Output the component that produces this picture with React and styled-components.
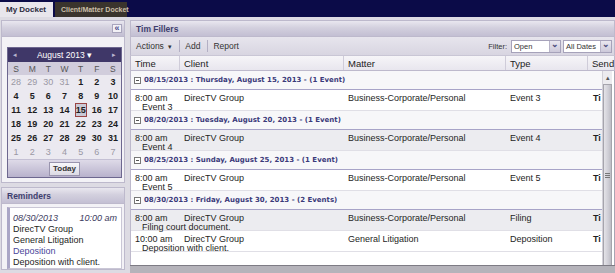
import React from 'react'
import styled, { createGlobalStyle } from 'styled-components'

const Global = createGlobalStyle`
  html, body { margin: 0; padding: 0; background: #dddbe3; }
  body { font-family: "Liberation Sans", Arial, sans-serif; font-size: 9px; color: #222; }
  * { box-sizing: border-box; }
`

const calDays = [
  [28, 29, 30, 31, 1, 2, 3],
  [4, 5, 6, 7, 8, 9, 10],
  [11, 12, 13, 14, 15, 16, 17],
  [18, 19, 20, 21, 22, 23, 24],
  [25, 26, 27, 28, 29, 30, 31],
  [1, 2, 3, 4, 5, 6, 7],
]

const groups = [
  {
    title: '08/15/2013 : Thursday, August 15, 2013 - (1 Event)',
    events: [{ time: '8:00 am', client: 'DirecTV Group', matter: 'Business-Corporate/Personal', type: 'Event 3', note: 'Event 3' }],
  },
  {
    title: '08/20/2013 : Tuesday, August 20, 2013 - (1 Event)',
    events: [{ time: '8:00 am', client: 'DirecTV Group', matter: 'Business-Corporate/Personal', type: 'Event 4', note: 'Event 4', shade: true }],
  },
  {
    title: '08/25/2013 : Sunday, August 25, 2013 - (1 Event)',
    events: [{ time: '8:00 am', client: 'DirecTV Group', matter: 'Business-Corporate/Personal', type: 'Event 5', note: 'Event 5' }],
  },
  {
    title: '08/30/2013 : Friday, August 30, 2013 - (2 Events)',
    events: [
      { time: '8:00 am', client: 'DirecTV Group', matter: 'Business-Corporate/Personal', type: 'Filing', note: 'Filing court document.', shade: true },
      { time: '10:00 am', client: 'DirecTV Group', matter: 'General Litigation', type: 'Deposition', note: 'Deposition with client.' },
    ],
  },
]

function App() {
  return (
    <Page>
      <Global />
      <TabBar>
        <Tab active>My Docket</Tab>
        <Tab>Client/Matter Docket</Tab>
      </TabBar>
      <Body>
        <Sidebar>
          <PanelHead>
            <span />
            <Collapse>«</Collapse>
          </PanelHead>
          <CalPanel>
            <Calendar>
              <CalHead>
                <Arrow>◂</Arrow>
                <span>August 2013 ▾</span>
                <Arrow>▸</Arrow>
              </CalHead>
              <DayNames>
                {['S', 'M', 'T', 'W', 'T', 'F', 'S'].map((d, i) => <span key={i}>{d}</span>)}
              </DayNames>
              <Dates>
                {calDays.map((row, r) =>
                  row.map((d, c) => {
                    const other = (r === 0 && d > 20) || r === 5
                    return (
                      <DateCell key={r + '-' + c} other={other} today={d === 15 && r === 2}>
                        {d}
                      </DateCell>
                    )
                  })
                )}
              </Dates>
              <TodayBar>
                <TodayButton>Today</TodayButton>
              </TodayBar>
            </Calendar>
          </CalPanel>
          <PanelHead gap>
            <HeadTitle>Reminders</HeadTitle>
          </PanelHead>
          <RemPanel>
            <Reminder>
              <RemTop>
                <span>08/30/2013</span>
                <span>10:00 am</span>
              </RemTop>
              <RemLine>DirecTV Group</RemLine>
              <RemLine>General Litigation</RemLine>
              <RemLine accent>Deposition</RemLine>
              <RemLine>Deposition with client.</RemLine>
            </Reminder>
          </RemPanel>
        </Sidebar>

        <Main>
          <PanelHead>
            <HeadTitle>Tim Fillers</HeadTitle>
          </PanelHead>
          <Toolbar>
            <ToolItem>Actions <Caret>▾</Caret></ToolItem>
            <Sep />
            <ToolItem>Add</ToolItem>
            <Sep />
            <ToolItem>Report</ToolItem>
            <Spacer />
            <FilterLabel>Filter:</FilterLabel>
            <Select width={50}>
              <span>Open</span>
              <SelectBtn>⌄</SelectBtn>
            </Select>
            <Select width={49}>
              <span>All Dates</span>
              <SelectBtn>⌄</SelectBtn>
            </Select>
          </Toolbar>
          <ColHead>
            <Col>Time</Col>
            <Col>Client</Col>
            <Col>Matter</Col>
            <Col>Type</Col>
            <Col last>Send</Col>
          </ColHead>
          <GridArea>
            <Rows>
              {groups.map((g) => (
                <React.Fragment key={g.title}>
                  <GroupRow>
                    <Toggle />
                    {g.title}
                  </GroupRow>
                  {g.events.map((e, i) => (
                    <EventRow key={i} shade={e.shade}>
                      <Cells>
                        <Cell>{e.time}</Cell>
                        <Cell>{e.client}</Cell>
                        <Cell>{e.matter}</Cell>
                        <Cell>{e.type}</Cell>
                        <Cell send>Ti</Cell>
                      </Cells>
                      <Note>{e.note}</Note>
                    </EventRow>
                  ))}
                </React.Fragment>
              ))}
            </Rows>
            <ScrollBar>
              <ScrollUp>▴</ScrollUp>
              <Thumb>
                <Grip />
              </Thumb>
            </ScrollBar>
          </GridArea>
          <BottomBar />
        </Main>
      </Body>
    </Page>
  )
}

export default App

const Page = styled.div`
  width: 615px;
  height: 273px;
  display: flex;
  flex-direction: column;
  overflow: hidden;
  background: #dddbe3;
`

const TabBar = styled.div`
  height: 17px;
  background: #0b0b48;
  display: flex;
  align-items: flex-end;
  flex-shrink: 0;
`

const Tab = styled.div`
  height: 15px;
  display: flex;
  align-items: center;
  white-space: nowrap;
  padding: ${(p) => (p.active ? '0 8px 0 6px' : '0 6px')};
  margin-right: 2px;
  font-size: ${(p) => (p.active ? '8px' : '7px')};
  font-weight: bold;
  background: ${(p) => (p.active ? '#e8e6ec' : '#3a342d')};
  color: ${(p) => (p.active ? '#2a2a3c' : '#cbbfa8')};
  width: ${(p) => (p.active ? '53px' : '72px')};
`

const Body = styled.div`
  flex: 1;
  display: flex;
  padding-top: 3px;
  min-height: 0;
`

const Sidebar = styled.div`
  width: 124px;
  margin-left: 1px;
  display: flex;
  flex-direction: column;
`

const PanelHead = styled.div`
  height: 17px;
  flex-shrink: 0;
  display: flex;
  align-items: center;
  justify-content: space-between;
  padding: 0 2px 0 5px;
  margin-top: ${(p) => (p.gap ? '4px' : '0')};
  background: linear-gradient(#e9e7ef 0%, #d3d0de 45%, #c3bfd3 100%);
  border: 1px solid #bdb9cc;
`

const HeadTitle = styled.span`
  font-weight: bold;
  font-size: 8.5px;
  color: #3e3e6e;
`

const Collapse = styled.div`
  width: 10px;
  height: 9px;
  border: 1px solid #a9a5bd;
  background: #f2f1f6;
  color: #4a4a8a;
  font-size: 9px;
  font-weight: bold;
  line-height: 6px;
  text-align: center;
`

const CalPanel = styled.div`
  height: 146px;
  background: #f3f2f6;
  border: 1px solid #bdb9cc;
  border-top: none;
  padding: 10px 3px 0 5px;
`

const Calendar = styled.div`
  width: 115px;
  border: 1px solid #6d678f;
  background: #ebe9f0;
`

const CalHead = styled.div`
  height: 14px;
  background: #3f3768;
  color: #fff;
  display: flex;
  align-items: center;
  justify-content: space-between;
  padding: 0 5px;
  font-size: 8.5px;
`

const Arrow = styled.span`
  color: #b9b5cf;
  font-size: 7px;
`

const DayNames = styled.div`
  height: 13px;
  display: grid;
  grid-template-columns: repeat(7, 1fr);
  align-items: center;
  text-align: center;
  background: #d1cddc;
  color: #555;
  font-size: 8.5px;
`

const Dates = styled.div`
  display: grid;
  grid-template-columns: repeat(7, 1fr);
  grid-auto-rows: 14px;
`

const DateCell = styled.div`
  display: flex;
  align-items: center;
  justify-content: center;
  font-size: 9px;
  font-weight: ${(p) => (p.other ? 'normal' : 'bold')};
  color: ${(p) => (p.other ? '#9a98a4' : '#1c1c22')};
  ${(p) =>
    p.today &&
    `
    margin: 0 2px;
    border: 1px solid #9a4444;
    background: #c9c9d6;
  `}
`

const TodayBar = styled.div`
  height: 18px;
  display: flex;
  align-items: center;
  justify-content: center;
  background: linear-gradient(#dedae8, #b8b2cc);
  border-top: 1px solid #c4c0d4;
`

const TodayButton = styled.div`
  height: 14px;
  padding: 0 3px;
  display: flex;
  align-items: center;
  border: 1px solid #9994ae;
  background: linear-gradient(#f8f7fa, #dcdae4);
  font-size: 8px;
  font-weight: bold;
  color: #333;
`

const RemPanel = styled.div`
  flex: 1;
  background: #f3f2f6;
  border: 1px solid #bdb9cc;
  border-top: none;
  padding: 3px 3px 0 5px;
  margin-bottom: 3px;
`

const Reminder = styled.div`
  width: 115px;
  height: 62px;
  background: #fff;
  border: 1px solid #cac7d6;
  border-left: 3px solid #aaa6c6;
  padding: 5px 4px 0 3px;
`

const RemTop = styled.div`
  display: flex;
  justify-content: space-between;
  font-style: italic;
  color: #3c3a5e;
  line-height: 11px;
  height: 11px;
`

const RemLine = styled.div`
  line-height: 11px;
  height: 11px;
  color: ${(p) => (p.accent ? '#4a469a' : '#1e1e24')};
`

const Main = styled.div`
  flex: 1;
  margin-left: 5px;
  display: flex;
  flex-direction: column;
  min-width: 0;
`

const Toolbar = styled.div`
  height: 18px;
  flex-shrink: 0;
  display: flex;
  align-items: center;
  padding: 0 2px 0 4px;
  background: linear-gradient(#e7e5ed, #d8d5e1);
  border-left: 1px solid #bdb9cc;
  border-right: 1px solid #bdb9cc;
  color: #333;
`

const ToolItem = styled.span`
  padding: 0 3px 0 1px;
  font-size: 8.5px;
`

const Caret = styled.span`
  font-size: 7px;
  margin-left: 2px;
`

const Sep = styled.span`
  width: 1px;
  height: 12px;
  background: #b3afc4;
  margin: 0 4px;
`

const Spacer = styled.div`
  flex: 1;
`

const FilterLabel = styled.span`
  font-size: 7.5px;
  margin-right: 2px;
`

const Select = styled.div`
  width: ${(p) => p.width}px;
  height: 13px;
  margin-left: 2px;
  background: #fff;
  border: 1px solid #a6a2ba;
  display: flex;
  align-items: center;
  justify-content: space-between;
  padding-left: 2px;
  font-size: 7.5px;
  white-space: nowrap;
  overflow: hidden;
`

const SelectBtn = styled.span`
  flex-shrink: 0;
  width: 11px;
  height: 11px;
  background: linear-gradient(#e9e7ef, #cdc9da);
  border-left: 1px solid #b8b4c8;
  color: #4a4a7a;
  font-size: 9px;
  font-weight: bold;
  line-height: 6px;
  text-align: center;
`

const cols = '49px 164px 162px 82px'

const ColHead = styled.div`
  height: 16px;
  flex-shrink: 0;
  display: grid;
  grid-template-columns: ${cols} 1fr;
  background: linear-gradient(#f6f5f8, #e8e6ee);
  border: 1px solid #bdb9cc;
  border-top: 1px solid #c9c6d5;
`

const Col = styled.div`
  display: flex;
  align-items: center;
  padding-left: 4px;
  font-size: 9.5px;
  color: #222;
  white-space: nowrap;
  overflow: hidden;
  border-right: ${(p) => (p.last ? 'none' : '1px solid #cfccd9')};
`

const GridArea = styled.div`
  flex: 1;
  display: flex;
  min-height: 0;
  background: #fff;
  border-left: 1px solid #bdb9cc;
  border-right: 1px solid #a9a6b4;
  padding-right: 2px;
`

const Rows = styled.div`
  width: 471px;
  overflow: hidden;
`

const GroupRow = styled.div`
  height: 19px;
  display: flex;
  align-items: center;
  padding-left: 3px;
  background: #f7f7f9;
  border-bottom: 1px solid #a8a4c8;
  color: #3b3a7a;
  font-family: "DejaVu Sans", Verdana, sans-serif;
  font-weight: bold;
  font-size: 7px;
  white-space: nowrap;
`

const Toggle = styled.span`
  width: 7px;
  height: 7px;
  border: 1px solid #777;
  background: #fff;
  margin-right: 3px;
  position: relative;
  &::after {
    content: '';
    position: absolute;
    left: 1px;
    right: 1px;
    top: 2px;
    height: 1px;
    background: #555;
  }
`

const EventRow = styled.div`
  height: 21px;
  padding-top: 3px;
  background: ${(p) => (p.shade ? '#ececf0' : '#fff')};
  border-bottom: 1px solid #e0dfe6;
`

const Cells = styled.div`
  display: grid;
  grid-template-columns: ${cols} 14px;
  line-height: 10px;
`

const Cell = styled.div`
  padding-left: ${(p) => (p.send ? '5px' : '4px')};
  white-space: nowrap;
  overflow: hidden;
  color: #1e1e24;
  font-weight: ${(p) => (p.send ? 'bold' : 'normal')};
`

const Note = styled.div`
  padding-left: 11px;
  line-height: 9px;
  color: #1e1e24;
  white-space: nowrap;
`

const ScrollBar = styled.div`
  width: 10px;
  display: flex;
  flex-direction: column;
  background: #ecebef;
  border-left: 1px solid #d2d0d8;
`

const ScrollUp = styled.div`
  height: 11px;
  margin-top: 1px;
  text-align: center;
  font-size: 7px;
  line-height: 11px;
  color: #555;
`

const Thumb = styled.div`
  flex: 1;
  margin-top: 1px;
  background: linear-gradient(90deg, #e4e3e8, #cfced6 60%, #bdbcc4);
  border: 1px solid #a5a4ac;
  border-bottom: none;
  display: flex;
  align-items: center;
  justify-content: center;
`

const Grip = styled.div`
  width: 5px;
  height: 5px;
  border-top: 1px solid #777;
  border-bottom: 1px solid #777;
  position: relative;
  &::after {
    content: '';
    position: absolute;
    left: 0;
    right: 0;
    top: 1px;
    height: 1px;
    background: #777;
  }
`

const BottomBar = styled.div`
  height: 8px;
  flex-shrink: 0;
  background: #b5b3ba;
  border-top: 1px solid #7d7b84;
`
